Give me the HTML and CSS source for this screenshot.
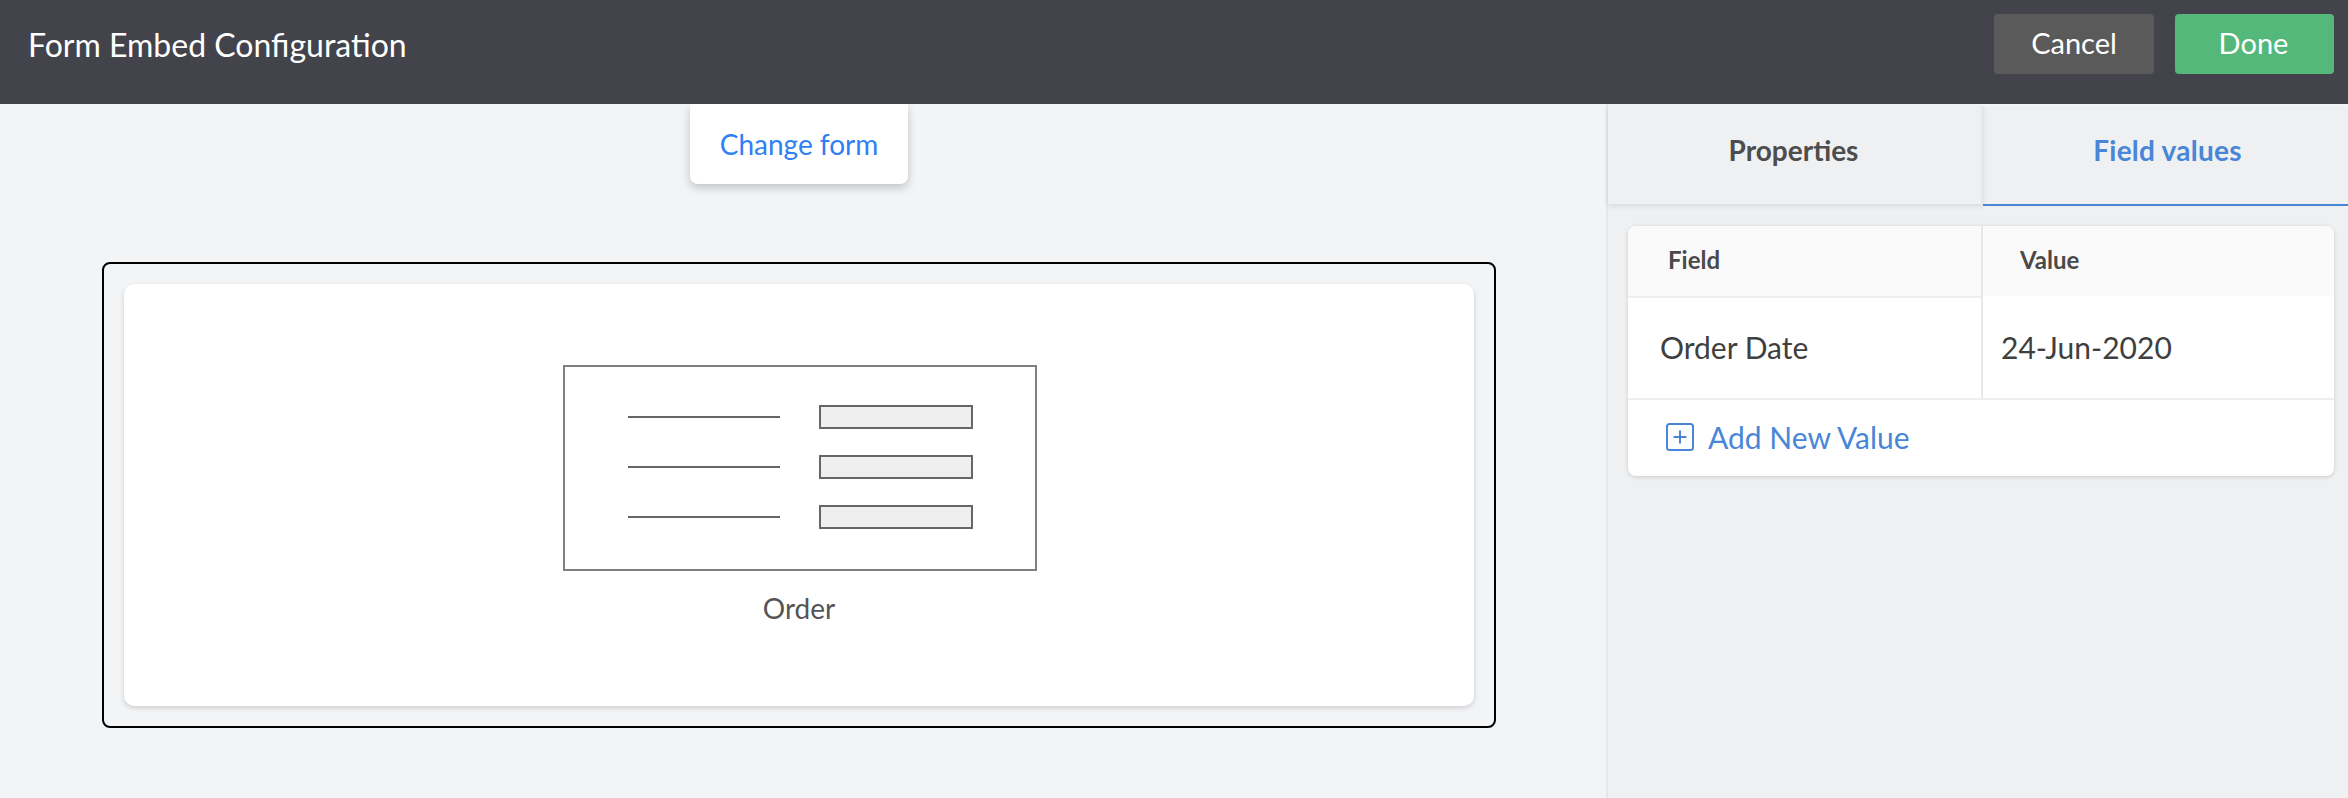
FILE: index.html
```html
<!DOCTYPE html>
<html lang="en">
<head>
<meta charset="utf-8">
<title>Form Embed Configuration</title>
<link rel="stylesheet" href="styles.css">
</head>
<body>
<header class="topbar">
  <h1 class="title">Form Embed Configuration</h1>
  <div class="actions">
    <button class="btn btn-cancel">Cancel</button>
    <button class="btn btn-done">Done</button>
  </div>
</header>
<main class="layout">
  <section class="canvas">
    <button class="change-form">Change form</button>
    <div class="selection">
      <div class="form-card">
        <svg class="form-art" width="474" height="206" viewBox="0 0 474 206" aria-hidden="true">
          <rect x="1" y="1" width="472" height="204" fill="#fff" stroke="#808080" stroke-width="2"/>
          <g stroke="#666" stroke-width="2">
            <path d="M65 52h152M65 102h152M65 152h152" fill="none"/>
            <rect x="257" y="41" width="152" height="22" fill="#efefef"/>
            <rect x="257" y="91" width="152" height="22" fill="#efefef"/>
            <rect x="257" y="141" width="152" height="22" fill="#efefef"/>
          </g>
        </svg>
        <div class="form-name">Order</div>
      </div>
    </div>
  </section>
  <aside class="panel">
    <nav class="tabs">
      <div class="tab">Properties</div>
      <div class="tab tab-active">Field values</div>
    </nav>
    <div class="values-card">
      <div class="cell cell-head cell-left">Field</div>
      <div class="cell cell-head cell-right">Value</div>
      <div class="cell cell-body cell-left">Order Date</div>
      <div class="cell cell-body cell-value">24-Jun-2020</div>
      <div class="add-row">
        <svg class="add-icon" width="28" height="28" viewBox="0 0 28 28" aria-hidden="true">
          <rect x="1" y="1" width="26" height="26" rx="2.5" fill="none" stroke="#4a86d8" stroke-width="2"/>
          <path d="M14 7.5v13M7.5 14h13" fill="none" stroke="#4a86d8" stroke-width="2"/>
        </svg>
        <span>Add New Value</span>
      </div>
    </div>
  </aside>
</main>
</body>
</html>
```
FILE: styles.css
```css
* { box-sizing: border-box; }
html, body { margin: 0; height: 100%; }
body {
  width: 2348px;
  height: 798px;
  overflow: hidden;
  background: #f3f4f6;
  font-family: "Lato", "Liberation Sans", sans-serif;
  color: #444;
  display: flex;
  flex-direction: column;
}
.topbar {
  height: 104px;
  flex: none;
  background: #43434b;
  display: flex;
  align-items: flex-start;
  justify-content: space-between;
  padding: 14px 14px 0 28px;
  position: relative;
  z-index: 2;
}
.title {
  margin: 0;
  font-size: 32px;
  font-weight: 400;
  line-height: 62px;
  color: #fff;
}
.actions { display: flex; gap: 21px; }
.btn {
  height: 60px;
  width: 160px;
  border: 0;
  border-radius: 4px;
  font: inherit;
  font-size: 29px;
  color: #fff;
  padding: 0 0 3px;
}
.btn-cancel { background: #5a5a5a; }
.btn-done { background: #53b87a; width: 159px; padding-right: 2px; }
.layout { flex: 1; display: flex; min-height: 0; }
.canvas {
  width: 1606px;
  flex: none;
  display: flex;
  flex-direction: column;
  align-items: center;
  padding: 0 110px 0 102px;
}
.change-form {
  width: 218px;
  height: 80px;
  border: 0;
  background: #fff;
  border-radius: 0 0 8px 8px;
  box-shadow: 0 4px 10px rgba(0,0,0,.2);
  color: #2f7ff5;
  font: inherit;
  font-size: 28px;
  padding: 0;
}
.selection {
  margin-top: 78px;
  width: 1394px;
  height: 466px;
  border: 2px solid #000;
  border-radius: 8px;
  padding: 20px;
}
.form-card {
  height: 422px;
  background: #fff;
  border-radius: 10px;
  box-shadow: 0 2px 5px rgba(0,0,0,.16);
  padding-top: 81px;
  display: flex;
  flex-direction: column;
  align-items: center;
}
.form-art { display: block; margin-left: 2px; }
.form-name { margin-top: 20px; font-size: 28px; line-height: 34px; color: #555; }
.panel {
  flex: 1;
  background: #eff0f2;
  border-left: 2px solid #e6e7e9;
  min-width: 0;
}
.tabs {
  display: grid;
  grid-template-columns: 375px 1fr;
  height: 102px;
  border-top: 2px solid #f4f5f6;
}
.tab {
  display: flex;
  align-items: center;
  justify-content: center;
  padding: 0 2px 11px 0;
  font-size: 28px;
  font-weight: 700;
  color: #4d4d4d;
  box-shadow: 0 2px 6px rgba(0,0,0,.1);
  border-right: 2px solid #e6e7e9;
  height: 98px;
}
.tab-active {
  color: #4a86d8;
  border-right: 0;
  border-bottom: 2px solid #4a86d8;
  height: 100px;
  padding: 0 0 11px 4px;
  box-shadow: none;
  letter-spacing: .25px;
}
.values-card {
  margin: 20px 14px 0 20px;
  display: grid;
  grid-template-columns: 355px 1fr;
  background: #fff;
  border-radius: 8px;
  box-shadow: 0 1px 4px rgba(0,0,0,.16);
  overflow: hidden;
}
.cell { display: flex; align-items: center; }
.cell-head {
  height: 72px;
  background: #fafafa;
  font-size: 24px;
  font-weight: 700;
  padding-bottom: 3px;
  color: #4a4a4a;
}
.cell-left { border-right: 2px solid #e8e8e8; }
.cell-head.cell-left { padding-left: 40px; border-bottom: 2px solid #eee; }
.cell-right { padding-left: 37px; border-bottom: 2px solid #fff; }
.cell-body {
  height: 102px;
  font-size: 30px;
  color: #3f3f3f;
  border-bottom: 2px solid #eee;
  padding-bottom: 2px;
}
.cell-body.cell-left { padding-left: 32px; }
.cell-value { padding-left: 18px; }
.add-row {
  grid-column: 1 / -1;
  height: 76px;
  display: flex;
  align-items: center;
  gap: 14px;
  padding: 0 0 2px 38px;
  font-size: 30px;
  color: #4a86d8;
}
.add-icon { flex: none; }
```
